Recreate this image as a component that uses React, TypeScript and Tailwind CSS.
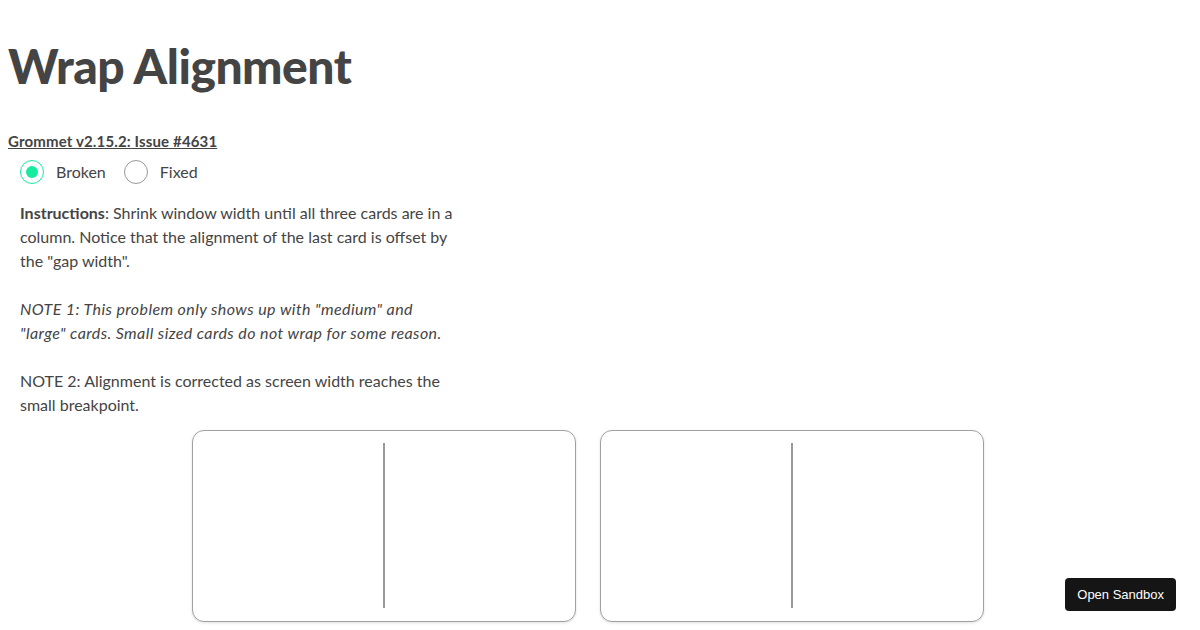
import React, { useState } from 'react';

const font = "font-['Lato','Noto_Sans',sans-serif]";

const Card: React.FC = () => (
    <div className="w-[384px] h-[192px] rounded-xl border border-[#a0a0a0] shadow-[0_1px_3px_rgba(0,0,0,0.12)] bg-white flex justify-center pt-[12px] pb-[13px]">
        <div className="w-[2px] bg-[#999999]" />
    </div>
);

const Radio: React.FC<{ label: string; checked: boolean; onClick: () => void }> = ({ label, checked, onClick }) => (
    <label className="flex items-center gap-3 cursor-pointer" onClick={onClick}>
        <span className={`w-6 h-6 rounded-full border flex items-center justify-center ${checked ? 'border-[#17eba0]' : 'border-[#999999]'}`}>
            {checked && <span className="w-3 h-3 rounded-full bg-[#17eba0]" />}
        </span>
        <span className="text-base">{label}</span>
    </label>
);

export default function App() {
    const [mode, setMode] = useState<'broken' | 'fixed'>('broken');

    return (
        <div className={`relative w-[1200px] h-[630px] overflow-hidden bg-white text-[#444444] ${font}`}>
            <div className="px-2">
                <h1 className="pt-[38px] text-[48px] leading-[56px] font-black tracking-[-0.5px]">Wrap Alignment</h1>

                <a href="#" className="block mt-[37px] text-[15px] leading-[20px] font-bold underline tracking-[0.15px] text-[#444444]">
                    Grommet v2.15.2: Issue #4631
                </a>

                <div className="flex gap-[18px] mt-[1px] px-3 py-[8px]">
                    <Radio label="Broken" checked={mode === 'broken'} onClick={() => setMode('broken')} />
                    <Radio label="Fixed" checked={mode === 'fixed'} onClick={() => setMode('fixed')} />
                </div>

                <div className="px-3 mt-[9px] w-[480px] text-base leading-6">
                    <p>
                        <strong>Instructions</strong>: Shrink window width until all three cards are in a<br />
                        column. Notice that the alignment of the last card is offset by<br />
                        the "gap width".
                    </p>
                    <p className="mt-6 italic tracking-[0.4px]">
                        NOTE 1: This problem only shows up with "medium" and<br />
                        "large" cards. Small sized cards do not wrap for some reason.
                    </p>
                    <p className="mt-6">
                        NOTE 2: Alignment is corrected as screen width reaches the<br />
                        small breakpoint.
                    </p>
                </div>

                <div className="flex gap-6 mt-[13px] pl-[184px]">
                    <Card />
                    <Card />
                </div>
            </div>

            <button className="absolute right-[24px] bottom-[19px] h-[33px] px-[12px] rounded bg-[#151515] text-white text-[13px] font-['Liberation_Sans',Arial,sans-serif]">
                Open Sandbox
            </button>
        </div>
    );
}
